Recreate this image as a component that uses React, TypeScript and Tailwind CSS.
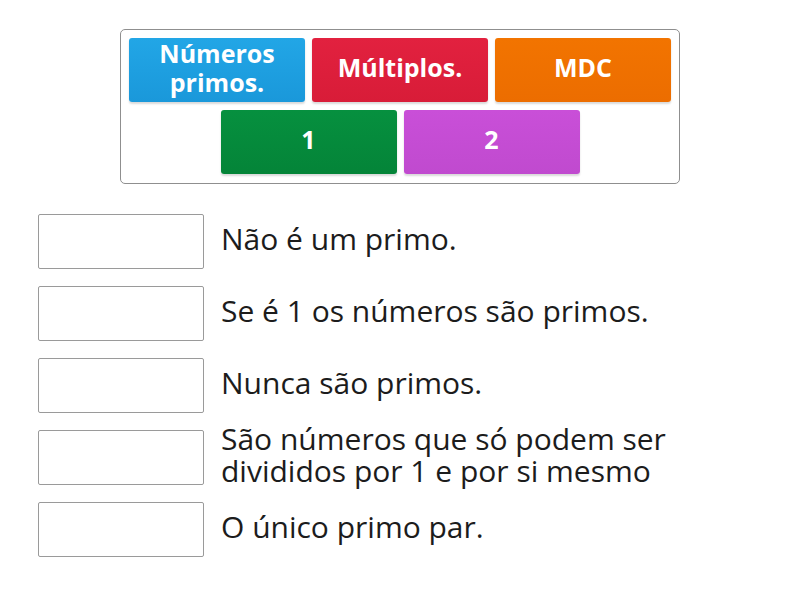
import React from 'react';

const tiles = [
  { label: 'Números primos.', cls: 'bg-[linear-gradient(#22a6e6,#1a98da)]' },
  { label: 'Múltiplos.', cls: 'bg-[linear-gradient(#e2213f,#d81c38)]' },
  { label: 'MDC', cls: 'bg-[linear-gradient(#f27400,#ec6d00)]' },
  { label: '1', cls: 'bg-[linear-gradient(#06903f,#048438)]' },
  { label: '2', cls: 'bg-[linear-gradient(#c94fd8,#c04acf)]' },
];

const rows = [
  ['Não é um primo.'],
  ['Se é 1 os números são primos.'],
  ['Nunca são primos.'],
  ['São números que só podem ser', 'divididos por 1 e por si mesmo'],
  ['O único primo par.'],
];

const Tile = ({ label, cls }: { label: string; cls: string }) => (
  <div
    className={`w-[176px] h-[64px] rounded-[3px] flex items-center justify-center text-center text-white font-bold text-[25px] leading-[29px] px-5 pb-[5px] shadow-[0_2px_2px_rgba(0,0,0,0.15)] ${cls}`}
  >
    {label}
  </div>
);

const App: React.FC = () => {
  return (
    <div className="w-[800px] h-[600px] bg-white font-['Open_Sans',sans-serif] text-[#1c1c1c]">
      <div className="pt-[29px] flex justify-center">
        <div className="w-[560px] h-[155px] border border-[#8f8f8f] rounded-[5px] flex flex-wrap justify-center content-start gap-x-[7px] gap-y-[8px] pt-[8px]">
          {tiles.map((t) => (
            <Tile key={t.label} label={t.label} cls={t.cls} />
          ))}
        </div>
      </div>

      <div className="pt-[30px] pl-[38px] flex flex-col gap-[17px]">
        {rows.map((lines, i) => (
          <div key={i} className="flex items-center h-[55px]">
            <div className="w-[166px] h-[55px] border border-[#9a9a9a] rounded-[2px] shrink-0" />
            <div className="pl-[17px] pb-[6px] text-[30px] leading-[32px] whitespace-nowrap">
              {lines.map((l) => (
                <div key={l}>{l}</div>
              ))}
            </div>
          </div>
        ))}
      </div>
    </div>
  );
};

export default App;
